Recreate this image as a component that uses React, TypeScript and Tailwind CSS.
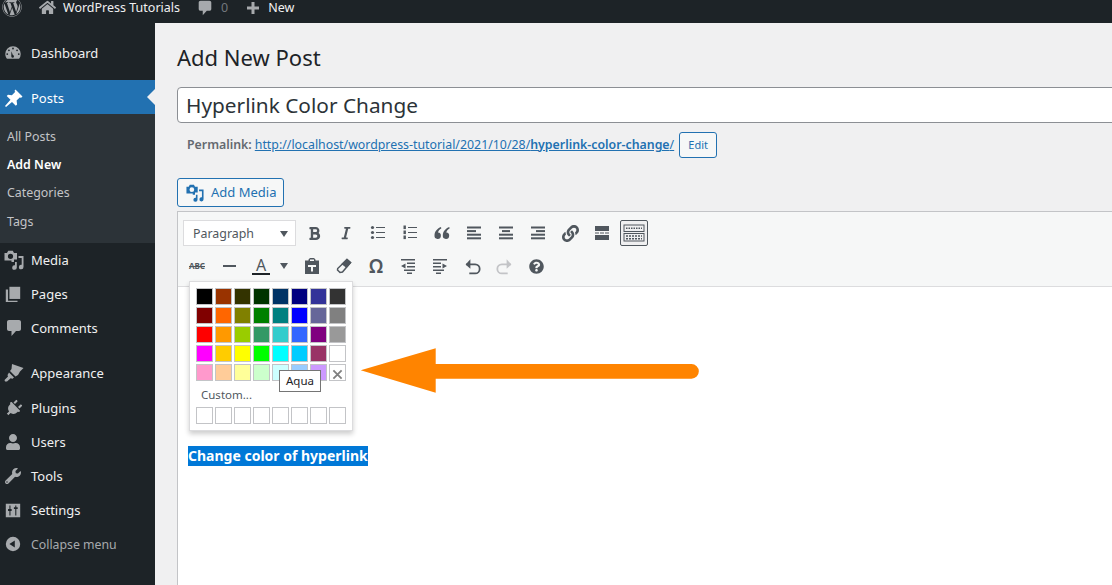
import React from "react";
import { FaWordpress, FaHome, FaPlug, FaUser, FaWrench, FaBold, FaItalic, FaLink, FaQuestionCircle } from "react-icons/fa";

const Gauge = () => (
  <svg viewBox="0 0 20 20" className="w-[18px] h-[18px]" fill="currentColor"><path d="M10 2.500a8.600 8.600 0 0 0-8.600 8.600c0 2 .7 3.900 1.900 5.400h13.400a8.600 8.600 0 0 0 1.900-5.400A8.600 8.600 0 0 0 10 2.500zM10 4a1 1 0 1 1 0 2 1 1 0 0 1 0-2zM5.500 6a1 1 0 1 1 0 2 1 1 0 0 1 0-2zm9 0a1 1 0 1 1 0 2 1 1 0 0 1 0-2zM3.600 10.200a1 1 0 1 1 0 2 1 1 0 0 1 0-2zm12.800 0a1 1 0 1 1 0 2 1 1 0 0 1 0-2zM8.200 8l1.600 4.200a1.500 1.500 0 1 1-1.700 1.300z" fillRule="evenodd"/></svg>
);
const MediaIcon = ({ cls }: { cls: string }) => (
  <svg viewBox="0 0 20 20" className={cls} fill="currentColor">
    <path fillRule="evenodd" d="M.5 3H3L4.200 .8h4.600L10 3h3v6.500H10V12H7.500V10.500H.5zM6.500 3.700a2.600 2.600 0 1 0 0 5.200 2.600 2.600 0 0 0 0-5.200z" />
    <path d="M14.500 6H19.500V17a2.300 2.300 0 1 1-1.800-2.200V8H14.500z" />
    <path d="M11 12h1.800v5.500a2.300 2.300 0 1 1-1.800-2.200z" />
  </svg>
);
const Pages = () => (
  <svg viewBox="0 0 20 20" className="w-[18px] h-[18px]" fill="currentColor"><path d="M6 2h12v13.500H6z"/><path d="M2 5h2.500v12.500H15V19H2z"/></svg>
);
const Sliders = () => (
  <svg viewBox="0 0 20 20" className="w-[18px] h-[18px]" fill="currentColor"><path fillRule="evenodd" d="M2 3h16v15H2zM6 5v4H4.500v2H6v5h1.200v-5h1.300V9H7.200V5zm6.500 0v2H11v2h1.500v7h1.200V9h1.500V7h-1.500V5z"/></svg>
);
const Collapse = () => (
  <svg viewBox="0 0 20 20" className="w-[18px] h-[18px]" fill="currentColor"><path fillRule="evenodd" d="M10 2a8 8 0 1 1 0 16 8 8 0 0 1 0-16zm2 4-6 4 6 4z"/></svg>
);
const Bubble = ({ cls }: { cls: string }) => (
  <svg viewBox="0 0 20 20" className={cls} fill="currentColor"><path d="M5 2h10c1.100 0 2 .9 2 2v7c0 1.100-.9 2-2 2h-3l-4.500 5v-5H5c-1.100 0-2-.9-2-2V4c0-1.100.9-2 2-2z"/></svg>
);
const Pin = () => (
  <svg viewBox="0 0 20 20" className="w-[20px] h-[20px] text-white" fill="currentColor"><path d="M11.500 1.500l7 7-1.600 1.600-.9-.9-3.400 3.400.5 3.900-1.300 1.300-3.800-3.800L2 19l-1-1 5.500-6.200-3.800-3.800 1.300-1.300 3.900.5 3.400-3.400-.9-.9z"/></svg>
);
const Brush = () => (
  <svg viewBox="0 0 20 20" className="w-[20px] h-[20px]" fill="currentColor"><path d="M8 1l11.500 4-3.500 3.500-2 3.500-2.500 1.500-5.500-5.500L7.500 6zM5 9.500l5 5-2 1.500-1-1-4 3.500H1l-.5-1.500L4 13.500 3.500 12z"/></svg>
);

const Menu = ({ icon, label, cls = "" }: { icon: React.ReactNode; label: string; cls?: string }) => (
  <div className={`flex items-center h-[34px] text-[13px] text-[#f0f0f1] ${cls}`}>
    <span className="w-[31px] pl-[4px] flex items-center text-[#a7aaad]">{icon}</span>
    <span className="mt-[2px]">{label}</span>
  </div>
);

const colors = [
  "#000000","#993300","#333300","#003300","#003366","#000080","#333399","#333333",
  "#800000","#FF6600","#808000","#008000","#008080","#0000FF","#666699","#808080",
  "#FF0000","#FF9900","#99CC00","#339966","#33CCCC","#3366FF","#800080","#999999",
  "#FF00FF","#FFCC00","#FFFF00","#00FF00","#00FFFF","#00CCFF","#993366","#FFFFFF",
  "#FF99CC","#FFCC99","#FFFF99","#CCFFCC","#CCFFFF","#99CCFF","#CC99FF",
];

const Btn = ({ children }: { children?: React.ReactNode }) => (
  <div className="w-[32px] h-[28px] flex items-center justify-center text-[#50575e]">{children}</div>
);

const lines = (rows: [number, number][]) => (
  <svg viewBox="0 0 16 16" className="w-[16px] h-[16px]" fill="currentColor">
    {rows.map(([x, w], i) => <rect key={i} x={x} y={1.500 + i * 3.600} width={w} height="2" />)}
  </svg>
);

const UL = () => (
  <svg viewBox="0 0 16 16" className="w-[16px] h-[16px]" fill="currentColor">
    {[2, 7, 12].map((y) => <g key={y}><circle cx="2.500" cy={y + 0.5} r="1.600" /><rect x="6" y={y} width="9" height="1" /></g>)}
  </svg>
);
const OL = () => (
  <svg viewBox="0 0 16 16" className="w-[16px] h-[16px]" fill="currentColor">
    {[2, 7, 12].map((y) => <g key={y}><rect x="1.500" y={y - 1.500} width="2.400" height="3.600" /><rect x="6" y={y} width="9" height="1" /></g>)}
  </svg>
);
const Quote = () => (
  <svg viewBox="0 0 16 14" className="w-[16px] h-[14px]" fill="currentColor">
    <path d="M7 1C3.500 2.500 .5 5 .5 9.500a3.200 3.200 0 1 0 3.500-3C4.200 5 5.500 3.500 7.300 2.500zM15.300 1C11.800 2.500 8.800 5 8.800 9.500a3.200 3.200 0 1 0 3.500-3C12.500 5 13.800 3.500 15.600 2.500z" />
  </svg>
);
const More = () => (
  <svg viewBox="0 0 16 16" className="w-[16px] h-[16px]" fill="currentColor"><path d="M1 1h14v5H1zM1 10h14v5H1zM1 7.500h4v1H1zM6 7.500h4v1H6zM11 7.500h4v1h-4z"/></svg>
);
const Kitchen = () => (
  <svg viewBox="0 0 22 18" className="w-[22px] h-[18px]" fill="none" stroke="currentColor" strokeWidth="1">
    <rect x="1" y="1" width="20" height="6.500" />
    <rect x="1" y="9.500" width="20" height="7.500" />
    <path strokeDasharray="1.500 1" strokeWidth="1.600" d="M3 4.200h16" />
    <path strokeDasharray="2 1" strokeWidth="1.400" d="M3 12h16M3 14.800h16" />
  </svg>
);
const Paste = () => (
  <svg viewBox="0 0 16 16" className="w-[16px] h-[16px]" fill="currentColor">
    <path fillRule="evenodd" d="M1 2.500h3.500V1.500L6 0h4l1.500 1.500v1H15V16H1zM6 1.500v1.500h4V1.500zM4 7v2h3v4.500h2V9h3V7z" />
  </svg>
);
const Eraser = () => (
  <svg viewBox="0 0 16 16" className="w-[16px] h-[16px]" fill="none" stroke="currentColor" strokeWidth="1.500">
    <path d="M11 1.500l3.500 3L6.500 14 4 14.500 1.500 12l.2-1.500z" />
    <path d="M11 1.500l3.500 3-4 4.500L6.500 6z" fill="currentColor" />
  </svg>
);
const Omega = () => <span className="text-[19px] leading-none font-semibold">Ω</span>;
const Indent = ({ flip }: { flip?: boolean }) => (
  <svg viewBox="0 0 16 16" className={flip ? "w-[16px] h-[16px] -scale-x-100" : "w-[16px] h-[16px]"} fill="currentColor">
    <path d="M1 1h14v1.600H1zM1 4.500h8v1.600H1zM1 8h8v1.600H1zM1 11.500h11v1.600H1zM4 14.600h5V16H4zM10.500 5.500l4.500 2.500-4.500 2.500z" />
  </svg>
);
const Undo = ({ cls, flip }: { cls: string; flip?: boolean }) => (
  <svg viewBox="0 0 16 16" className={`w-[17px] h-[17px] ${flip ? "-scale-x-100" : ""} ${cls}`} fill="none" stroke="currentColor" strokeWidth="1.700">
    <path d="M5 14.500h5.500a4 4 0 0 0 0-8.500H2" />
    <path d="M6 1.200 1.500 6 6 10.200 6 1.200z" fill="currentColor" stroke="none" />
  </svg>
);
const Xmark = () => (
  <svg viewBox="0 0 12 12" className="w-[11px] h-[11px] mt-[4px]" stroke="#808080" strokeWidth="2"><path d="M1.500 1.500l9 9M10.500 1.500l-9 9" /></svg>
);

export default function App() {
  return (
    <div className="w-[1112px] h-[585px] overflow-hidden flex flex-col bg-[#f0f0f1] font-['Noto_Sans','Open_Sans',sans-serif]">
      <div className="h-[23px] shrink-0 bg-[#1d2327]">
        <div className="h-[16px] flex items-center text-[12.500px] leading-[16px] text-[#f0f0f1]">
          <FaWordpress className="w-[20px] h-[20px] ml-[2px] -mt-[3px] text-[#a7aaad] shrink-0" />
          <FaHome className="w-[17px] h-[17px] ml-[17px] -mt-[1px] text-[#a7aaad] shrink-0" />
          <span className="ml-[7px] w-[134px] whitespace-nowrap">WordPress Tutorials</span>
          <Bubble cls="w-[18px] h-[18px] -mt-[1px] -ml-[1px] text-[#a7aaad] shrink-0" />
          <span className="ml-[7px] text-[#72777c]">0</span>
          <svg viewBox="0 0 14 14" className="w-[14px] h-[14px] ml-[18px] text-[#a7aaad] shrink-0" fill="currentColor"><path d="M5.500 1h3v4.500H13v3H8.500V13h-3V8.500H1v-3h4.500z" /></svg>
          <span className="ml-[8px]">New</span>
        </div>
      </div>
      <div className="flex flex-1 min-h-0">
        <aside className="w-[155px] shrink-0 bg-[#1d2327] flex flex-col pt-[13px]">
          <Menu icon={<Gauge />} label="Dashboard" />
          <div className="relative mt-[10px] bg-[#2271b1]">
            <Menu icon={<Pin />} label="Posts" cls="text-white pt-[2px]" />
            <div className="absolute right-0 top-[9px] w-0 h-0 border-y-[8px] border-y-transparent border-r-[8px] border-r-[#f0f0f1]" />
          </div>
          <div className="bg-[#2c3338] h-[129px] pt-[9px] text-[12.400px] text-[#c3c4c7] flex flex-col">
            <div className="h-[28px] pl-[7px] flex items-center">All Posts</div>
            <div className="h-[28px] pl-[7px] flex items-center font-semibold text-white">Add New</div>
            <div className="h-[28px] pl-[7px] flex items-center">Categories</div>
            <div className="h-[29px] pl-[7px] pt-[2px] flex items-center">Tags</div>
          </div>
          <Menu icon={<MediaIcon cls="w-[20px] h-[20px]" />} label="Media" />
          <Menu icon={<Pages />} label="Pages" />
          <Menu icon={<Bubble cls="w-[20px] h-[20px]" />} label="Comments" />
          <div className="h-[11px]" />
          <Menu icon={<Brush />} label="Appearance" />
          <div className="h-[1px]" />
          <Menu icon={<FaPlug className="w-[17px] h-[17px] rotate-45 ml-[1px]" />} label="Plugins" />
          <Menu icon={<FaUser className="w-[16px] h-[16px] ml-[1px]" />} label="Users" />
          <Menu icon={<FaWrench className="w-[16px] h-[16px] ml-[1px]" />} label="Tools" />
          <Menu icon={<Sliders />} label="Settings" />
          <div className="flex items-center h-[34px] text-[12.300px] text-[#a7aaad]">
            <span className="w-[31px] pl-[4px] flex items-center"><Collapse /></span>
            <span className="mt-[2px]">Collapse menu</span>
          </div>
        </aside>
        <main className="flex-1 min-w-0 pl-[22px] flex flex-col">
          <h1 className="mt-[18px] h-[32px] text-[22px] leading-[32px] text-[#1d2327] whitespace-nowrap">Add New Post</h1>
          <div className="mt-[14px] h-[36px] w-[1000px] shrink-0 bg-white border border-[#8c8f94] rounded-[4px] pl-[8px] pt-[1px] flex items-center text-[20.800px] text-[#2c3338] whitespace-nowrap">Hyperlink Color Change</div>
          <div className="mt-[9px] h-[26px] pl-[10px] flex items-center text-[12.350px] text-[#646970] whitespace-nowrap">
            <span className="font-semibold">Permalink:</span>
            <span className="ml-[3px] text-[#2271b1] underline">http://localhost/wordpress-tutorial/2021/10/28/<span className="font-semibold">hyperlink-color-change</span>/</span>
            <span className="ml-[5px] w-[38px] h-[26px] flex items-center justify-center border border-[#2271b1] rounded-[3px] bg-[#f6f7f7] text-[11px] text-[#2271b1]">Edit</span>
          </div>
          <div className="mt-[20px] w-[107px] h-[29px] flex items-center border border-[#2271b1] rounded-[3px] bg-[#f6f7f7] text-[13px] text-[#2271b1] whitespace-nowrap">
            <MediaIcon cls="w-[18px] h-[18px] ml-[8px] mr-[7px]" />
            <span>Add Media</span>
          </div>
          <div className="relative mt-[4px] flex-1 w-[1000px] flex flex-col border-l border-t border-[#c3c4c7] bg-white">
            <div className="h-[75px] bg-[#f6f7f7] border-b border-[#dcdcde] pl-[5px] pt-[7px] flex flex-col">
              <div className="flex items-center h-[28px]">
                <div className="w-[113px] h-[26px] bg-white border border-[#dcdcde] flex items-center justify-between pl-[9px] pr-[6px] pt-[2px] text-[12.400px] text-[#50575e]">
                  <span>Paragraph</span>
                  <span className="w-0 h-0 border-x-[4px] border-x-transparent border-t-[6px] border-t-[#50575e] mr-[1px]" />
                </div>
                <div className="w-[2px]" />
                <Btn><FaBold className="w-[13px] h-[15px]" /></Btn>
                <Btn><FaItalic className="w-[12px] h-[14px]" /></Btn>
                <Btn><UL /></Btn>
                <Btn><OL /></Btn>
                <Btn><Quote /></Btn>
                <Btn>{lines([[1, 14], [1, 9], [1, 14], [1, 14]])}</Btn>
                <Btn>{lines([[1, 14], [4, 8], [1, 14], [1, 14]])}</Btn>
                <Btn>{lines([[1, 14], [6, 9], [1, 14], [1, 14]])}</Btn>
                <Btn><FaLink className="w-[17px] h-[17px]" /></Btn>
                <Btn><More /></Btn>
                <div className="w-[28px] h-[26px] ml-[2px] flex items-center justify-center border border-[#50575e] bg-[#f0f0f1] rounded-[2px] text-[#50575e]"><Kitchen /></div>
              </div>
              <div className="flex items-center h-[28px] mt-[5px] -ml-[2px]">
                <div className="w-[32px] h-[28px] flex items-center justify-center text-[8px] font-bold text-[#50575e] line-through">ABC</div>
                <Btn><span className="w-[13px] h-[2px] bg-[#50575e]" /></Btn>
                <div className="w-[32px] flex flex-col items-center text-[#50575e]">
                  <span className="text-[16px] leading-[16px]">A</span>
                  <span className="w-[18px] h-[2px] bg-[#1d2327]" />
                </div>
                <div className="w-[14px] flex justify-center"><span className="w-0 h-0 border-x-[4px] border-x-transparent border-t-[6px] border-t-[#50575e]" /></div>
                <div className="w-[5px]" />
                <Btn><Paste /></Btn>
                <Btn><Eraser /></Btn>
                <Btn><Omega /></Btn>
                <Btn><Indent flip /></Btn>
                <Btn><Indent /></Btn>
                <Btn><Undo cls="" /></Btn>
                <Btn><Undo cls="text-[#c3c4c7]" flip /></Btn>
                <Btn><FaQuestionCircle className="w-[15px] h-[15px]" /></Btn>
              </div>
            </div>
            <div className="flex-1 pl-[10px] pt-[156px]">
              <span className="text-[14px] font-bold text-white bg-[#0078d7] leading-[20px] inline-block whitespace-nowrap">Change color of hyperlink</span>
            </div>

            <div className="absolute left-[11px] top-[69px] w-[164px] h-[150px] bg-white border border-[#dcdcde] shadow-[0_3px_5px_rgba(0,0,0,0.2)] p-[6px]">
              <div className="grid grid-cols-[repeat(8,17px)] auto-rows-[17px] gap-[2px]">
                {colors.map((c) => (
                  <div key={c} className="border border-[#c3c4c7]" style={{ backgroundColor: c }} />
                ))}
                <div className="border border-[#c3c4c7] flex items-center justify-center"><Xmark /></div>
              </div>
              <div className="h-[24px] mt-[2px] pl-[5px] flex items-center text-[11.500px] text-[#50575e]">Custom...</div>
              <div className="grid grid-cols-[repeat(8,17px)] auto-rows-[17px] gap-[2px]">
                {Array.from({ length: 8 }, (_, i) => <div key={i} className="border border-[#c3c4c7]" />)}
              </div>
            </div>
            <div className="absolute left-[101px] top-[158px] w-[42px] h-[22px] bg-white border border-[#757575] flex items-center justify-center text-[11.500px] text-[#1d2327]">Aqua</div>
            <svg className="absolute left-[182px] top-[135px]" width="340" height="48" viewBox="0 0 340 48">
              <path d="M.7 23.300 75.700 1.300V17H331.500a7.300 7.300 0 0 1 0 14.700H75.700V45.700z" fill="#ff8400" />
            </svg>
          </div>
        </main>
      </div>
    </div>
  );
}
